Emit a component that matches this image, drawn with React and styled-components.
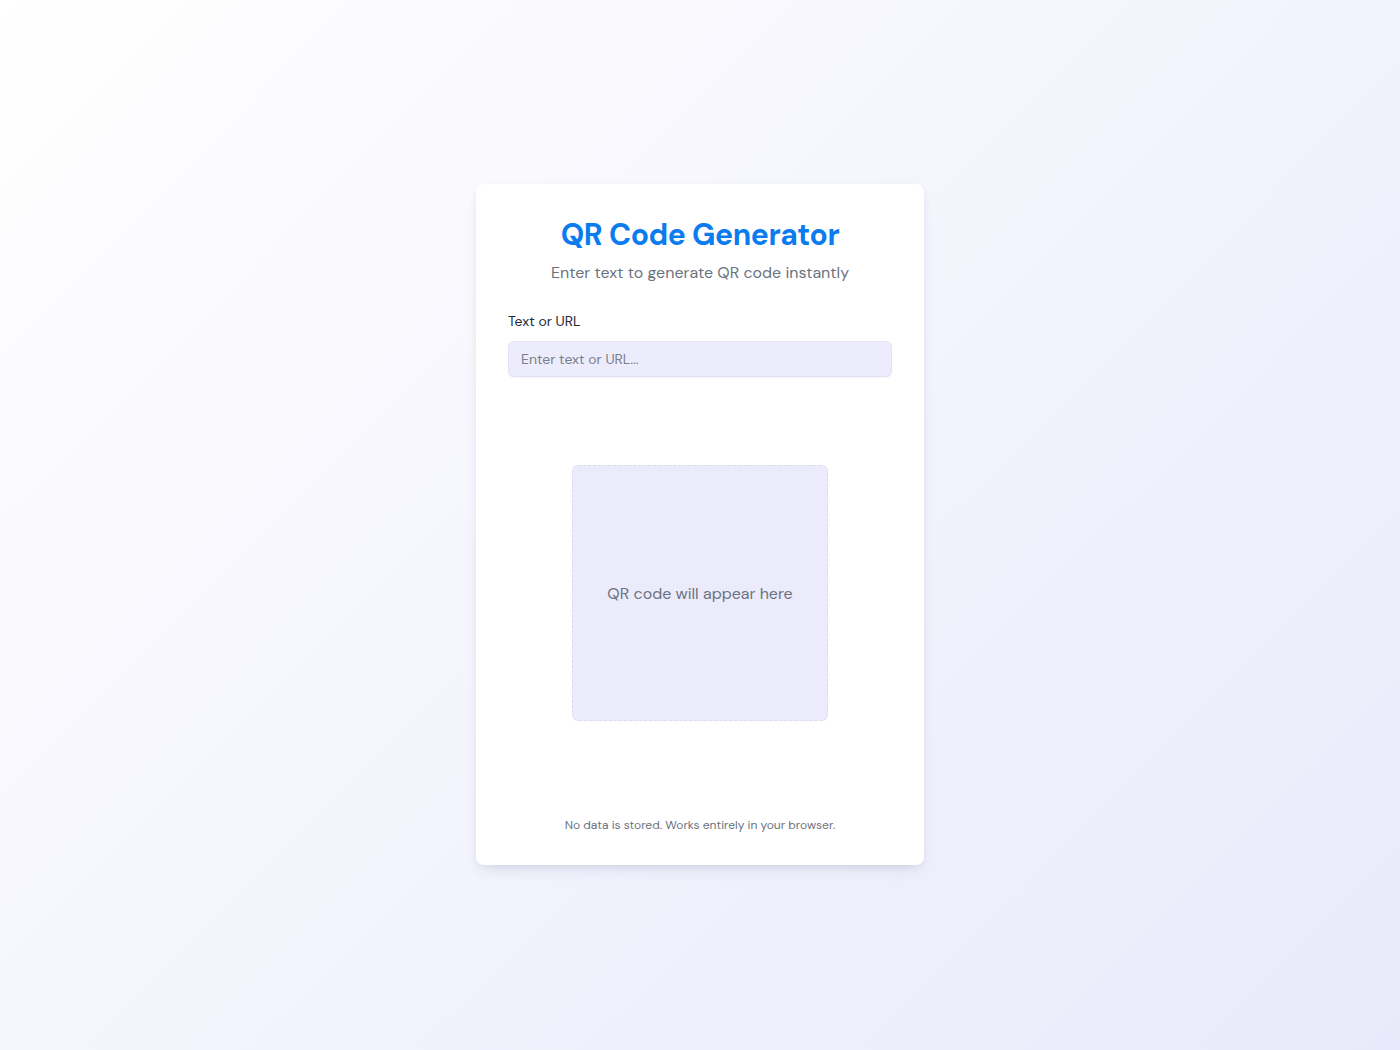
import styled, { createGlobalStyle } from 'styled-components';

const GlobalStyle = createGlobalStyle`
  * { box-sizing: border-box; }
  body {
    margin: 0;
    font-family: "DM Sans", Inter, "Noto Sans", sans-serif;
  }
`;

export default function App() {
  return (
    <>
      <GlobalStyle />
      <StPage>
        <StCard>
          <StHeader>
            <StTitle>QR Code Generator</StTitle>
            <StSubtitle>Enter text to generate QR code instantly</StSubtitle>
          </StHeader>
          <StField>
            <StLabel htmlFor="qr-text">Text or URL</StLabel>
            <StInput id="qr-text" type="text" placeholder="Enter text or URL..." />
          </StField>
          <StPreviewSection>
            <StPreviewBox>QR code will appear here</StPreviewBox>
          </StPreviewSection>
          <StFooter>No data is stored. Works entirely in your browser.</StFooter>
        </StCard>
      </StPage>
    </>
  );
}

const StPage = styled.div`
  min-height: 100vh;
  display: flex;
  align-items: center;
  justify-content: center;
  padding-bottom: 1px;
  background: linear-gradient(135deg, #ffffff 0%, #f4f4fd 50%, #e9e9fb 100%);
`;

const StCard = styled.div`
  width: 448px;
  background: #ffffff;
  border-radius: 8px;
  padding: 33px 32px 32px;
  box-shadow: 0 8px 16px -6px rgba(60, 60, 110, 0.16), 0 2px 6px rgba(60, 60, 110, 0.05);
`;

const StHeader = styled.div`
  text-align: center;
  margin-bottom: 26px;
`;

const StTitle = styled.h1`
  margin: 0;
  font-size: 30px;
  line-height: 36px;
  font-weight: 700;
  color: #0a7cf0;
  letter-spacing: -0.4px;
`;

const StSubtitle = styled.p`
  margin: 8px 0 0;
  font-size: 16px;
  line-height: 24px;
  color: #6b7280;
`;

const StField = styled.div`
  display: flex;
  flex-direction: column;
  gap: 10px;
`;

const StLabel = styled.label`
  font-size: 14px;
  line-height: 20px;
  color: #1f2937;
`;

const StInput = styled.input`
  height: 36px;
  width: 100%;
  padding: 0 12px;
  border: 1px solid #e2e2f4;
  border-radius: 6px;
  background: #ececfd;
  font-family: inherit;
  font-size: 14px;
  color: #1f2937;
  outline: none;
  box-shadow: 0 1px 2px rgba(60, 60, 110, 0.06);

  &::placeholder {
    color: #7a7f8c;
  }
`;

const StPreviewSection = styled.div`
  display: flex;
  justify-content: center;
  padding: 88px 0 96px;
`;

const StPreviewBox = styled.div`
  width: 256px;
  height: 256px;
  display: flex;
  align-items: center;
  justify-content: center;
  background: #ebebfc;
  border: 1px dashed #dcdcee;
  border-radius: 6px;
  font-size: 16px;
  color: #6b7280;
`;

const StFooter = styled.p`
  margin: 0;
  text-align: center;
  font-size: 12px;
  line-height: 16px;
  color: #6b7280;
`;
